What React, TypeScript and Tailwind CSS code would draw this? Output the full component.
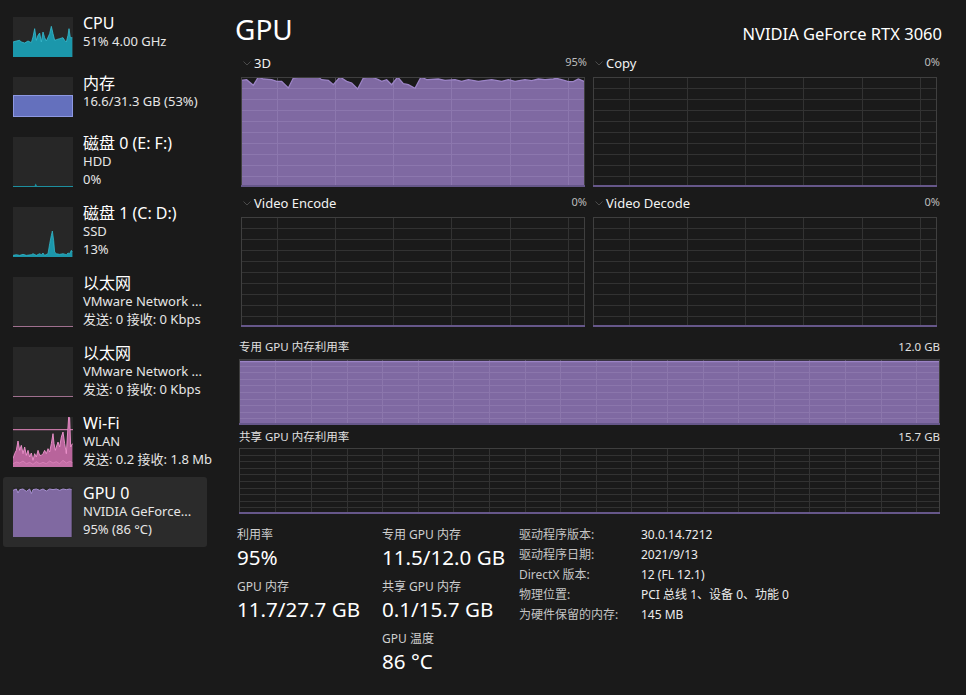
import React from "react";

type P = [number, number];

function mapPts(raw: P[], zx0: number, zy0: number, s = 3): P[] {
  return raw.map(([x, y]) => [(x - zx0) / s, (y - zy0) / s]);
}

function areaPath(p: P[], h: number) {
  const first = p[0];
  const last = p[p.length - 1];
  return (
    `M ${first[0]} ${h} ` +
    p.map(([x, y]) => `L ${x.toFixed(2)} ${y.toFixed(2)}`).join(" ") +
    ` L ${last[0]} ${h} Z`
  );
}
function linePath(p: P[]) {
  return p.map(([x, y], i) => `${i === 0 ? "M" : "L"} ${x.toFixed(2)} ${y.toFixed(2)}`).join(" ");
}

function Grid({ w, h, off, sp, rows, color }: { w: number; h: number; off: number; sp: number; rows: number; color: string }) {
  const els: React.ReactNode[] = [];
  for (let x = off; x < w - 1; x += sp) {
    const xx = Math.round(x) + 0.5;
    els.push(<line key={"v" + x} x1={xx} y1={0} x2={xx} y2={h} stroke={color} strokeWidth={1} />);
  }
  for (let i = 1; i < rows; i++) {
    const yy = Math.round((h * i) / rows) + 0.5;
    els.push(<line key={"h" + i} x1={0} y1={yy} x2={w} y2={yy} stroke={color} strokeWidth={1} />);
  }
  return <>{els}</>;
}

const PURPLE = "#7f69a2";
const PURPLE_LINE = "#9c84c6";

const raw3D: P[] = [
  [48, 242], [65, 240], [85, 257], [100, 232], [115, 238], [140, 240], [155, 245], [170, 245], [190, 265], [205, 235],
  [220, 233], [280, 233], [290, 240], [310, 242], [325, 255], [345, 232], [365, 245], [380, 250], [398, 268], [415, 235],
  [430, 232], [440, 232], [460, 240], [470, 245], [485, 240], [500, 255], [518, 232], [535, 252], [550, 255], [570, 266],
  [588, 232], [605, 240], [640, 238], [660, 242], [690, 240], [710, 245], [730, 240], [760, 245], [800, 240], [830, 245],
  [850, 240], [870, 245], [900, 240], [920, 243], [940, 238], [960, 240], [985, 238], [995, 236], [1010, 240], [1030, 246],
  [1045, 246], [1060, 238], [1077, 245],
];

function SmallGraph({ data }: { data?: P[] }) {
  const w = 344;
  const h = 110;
  return (
    <svg width={w} height={h} className="block">
      <rect x={0} y={0} width={w} height={h} fill="#1a1a1a" />
      <Grid w={w} h={h} off={35.5} sp={58.3} rows={10} color="#323232" />
      {data && (
        <>
          <path d={areaPath(data, h)} fill={PURPLE} />
          <g opacity={0.18}>
            <Grid w={w} h={h} off={35.5} sp={58.3} rows={10} color="#c9b8e6" />
          </g>
          <path d={linePath(data)} fill="none" stroke={PURPLE_LINE} strokeWidth={1.3} />
        </>
      )}
      <rect x={0.5} y={0.5} width={w - 1} height={h - 1} fill="none" stroke="#3f3f3f" strokeWidth={1} />
      <line x1={0} y1={h - 1} x2={w} y2={h - 1} stroke="#66578a" strokeWidth={2} />
    </svg>
  );
}

function Chevron() {
  return (
    <svg width="8" height="5" viewBox="0 0 8 5" className="block">
      <path d="M0.5 0.5 L4 4 L7.5 0.5" fill="none" stroke="#4a4a4a" strokeWidth="1" />
    </svg>
  );
}

function ChartCell({ label, pct, data }: { label: string; pct: string; data?: P[] }) {
  return (
    <div className="flex flex-col">
      <div className="flex h-[22px] items-start justify-between">
        <div className="-mt-[1px] flex items-center">
          <div className="ml-[5px] mr-[3px] mt-[1px] flex h-[16px] items-center">
            <Chevron />
          </div>
          <span className="text-[13px] leading-[16px] text-[#f2f2f2]">{label}</span>
        </div>
        <span className="-mt-[1px] text-[11px] leading-[16px] text-[#bdbdbd]">{pct}</span>
      </div>
      <div className="ml-[3px]">
        <SmallGraph data={data} />
      </div>
    </div>
  );
}

function MemGraph({ filled }: { filled: boolean }) {
  const w = 701;
  const h = 66;
  return (
    <svg width={w} height={h} className="block">
      <rect x={0} y={0} width={w} height={h} fill="#1a1a1a" />
      <Grid w={w} h={h} off={36.4} sp={35.6} rows={10} color="#323232" />
      {filled && (
        <>
          <rect x={0} y={2} width={w} height={h - 2} fill={PURPLE} />
          <g opacity={0.12}>
            <Grid w={w} h={h} off={36.4} sp={35.6} rows={10} color="#e0d4f5" />
          </g>
          <line x1={0} y1={2.5} x2={w} y2={2.5} stroke={PURPLE_LINE} strokeWidth={1.5} />
        </>
      )}
      <rect x={0.5} y={0.5} width={w - 1} height={h - 1} fill="none" stroke="#3f3f3f" strokeWidth={1} />
      <line x1={0} y1={h - 1} x2={w} y2={h - 1} stroke="#66578a" strokeWidth={2} />
    </svg>
  );
}

/* ---------- Sidebar thumbnails ---------- */

const cpuRaw: P[] = [
  [40, 125], [50, 122], [60, 120], [65, 125], [75, 128], [85, 122], [95, 127], [100, 110], [105, 85], [110, 120],
  [115, 105], [120, 98], [125, 125], [130, 95], [135, 112], [140, 122], [150, 100], [155, 78], [160, 100], [165, 120],
  [170, 118], [180, 115], [190, 112], [195, 120], [200, 125], [205, 105], [208, 85], [212, 112], [218, 112],
];
const disk1Raw: P[] = [
  [40, 165], [50, 163], [60, 165], [70, 162], [80, 165], [95, 163], [100, 160], [110, 165], [120, 160], [125, 163],
  [130, 158], [135, 165], [145, 160], [150, 130], [155, 105], [158, 92], [162, 120], [165, 155], [170, 160], [180, 162],
  [190, 160], [200, 163], [205, 158], [210, 160], [215, 150], [218, 155],
];
const wifiRaw: P[] = [
  [40, 175], [45, 160], [50, 150], [55, 122], [60, 150], [65, 135], [70, 160], [75, 140], [80, 165], [85, 150],
  [90, 170], [95, 158], [100, 180], [105, 160], [110, 170], [115, 150], [120, 165], [125, 165], [130, 160], [135, 150],
  [140, 160], [145, 145], [150, 155], [155, 130], [160, 100], [163, 130], [167, 150], [170, 140], [175, 125], [180, 140],
  [185, 110], [190, 95], [195, 130], [200, 160], [203, 110], [207, 50], [210, 52], [213, 140], [218, 130],
];
const wifiLowRaw: P[] = [
  [40, 190], [50, 185], [60, 188], [70, 182], [80, 190], [90, 186], [100, 192], [110, 184], [120, 190], [130, 186],
  [140, 190], [150, 182], [160, 188], [170, 184], [180, 190], [190, 180], [200, 188], [210, 183], [218, 186],
];
const gpuRaw: P[] = [
  [40, 62], [50, 58], [55, 70], [60, 60], [70, 58], [80, 65], [90, 58], [95, 72], [100, 60], [110, 58], [120, 62],
  [130, 58], [140, 64], [150, 58], [160, 60], [170, 58], [180, 62], [190, 58], [200, 60], [210, 58], [216, 60],
];

function Thumb({ h, children }: { h: number; children?: React.ReactNode }) {
  return (
    <svg width={60} height={h} className="block shrink-0">
      <rect x={0} y={0} width={60} height={h} fill="#272727" />
      {children}
    </svg>
  );
}

function CpuThumb() {
  const p = mapPts(cpuRaw, 40, 50);
  return (
    <Thumb h={40}>
      <path d={areaPath(p, 40)} fill="#1b97ab" />
      <path d={linePath(p)} fill="none" stroke="#37bdd0" strokeWidth={0.8} />
    </Thumb>
  );
}
function MemThumb() {
  return (
    <Thumb h={40}>
      <rect x={0.5} y={18.5} width={59} height={21} fill="#6470bd" stroke="#8d98e2" strokeWidth={1} />
    </Thumb>
  );
}
function Disk0Thumb() {
  return (
    <Thumb h={50}>
      <path d="M0 50 L0 49 L21.5 49 L22.7 46.5 L24 49 L60 49 L60 50 Z" fill="#1d8f9f" />
    </Thumb>
  );
}
function Disk1Thumb() {
  const p = mapPts(disk1Raw, 40, 20);
  return (
    <Thumb h={50}>
      <path d={areaPath(p, 50)} fill="#1b97ab" />
      <path d={linePath(p)} fill="none" stroke="#37bdd0" strokeWidth={0.7} />
    </Thumb>
  );
}
function EthThumb() {
  return (
    <Thumb h={50}>
      <line x1={0} y1={49.5} x2={60} y2={49.5} stroke="#a0708f" strokeWidth={1} />
    </Thumb>
  );
}
function WifiThumb() {
  const p = mapPts(wifiRaw, 40, 50);
  const q = mapPts(wifiLowRaw, 40, 50);
  return (
    <Thumb h={50}>
      <line x1={0} y1={12.7} x2={60} y2={12.7} stroke="#e889c2" strokeWidth={1} />
      <path d={areaPath(p, 50)} fill="#b8649b" />
      <path d={linePath(p)} fill="none" stroke="#f094cf" strokeWidth={0.9} />
      <path d={areaPath(q, 50)} fill="#c46fa6" />
      <path d={linePath(q)} fill="none" stroke="#e58cc4" strokeWidth={0.6} />
    </Thumb>
  );
}
function GpuThumb() {
  const p = mapPts(gpuRaw, 40, 52);
  return (
    <Thumb h={50}>
      <path d={areaPath(p, 50)} fill="#8069a1" />
      <path d={linePath(p)} fill="none" stroke="#a68fd0" strokeWidth={1} />
    </Thumb>
  );
}

function SideItem({
  title,
  lines,
  thumb,
  selected,
}: {
  title: string;
  lines: string[];
  thumb: React.ReactNode;
  selected?: boolean;
}) {
  const tall = lines.length > 1;
  return (
    <div
      className={
        "ml-[3px] flex w-[204px] shrink-0 gap-[10px] rounded-[3px] pl-[10px] pt-[10px] " +
        (tall ? "h-[70px] " : "h-[60px] ") +
        (selected ? "bg-[#2b2b2b]" : "")
      }
    >
      {thumb}
      <div className="-mt-[4px] flex min-w-0 flex-col">
        <div className="h-[20px] whitespace-nowrap text-[16px] leading-[20px] text-white">{title}</div>
        {lines.map((l, i) => (
          <div key={i} className="h-[17.5px] whitespace-nowrap text-[13px] leading-[17.5px] text-[#e6e6e6]">
            {l}
          </div>
        ))}
      </div>
    </div>
  );
}

function Stat({ label, value }: { label: string; value: string }) {
  return (
    <div className="mb-[8px] flex flex-col">
      <div className="h-[16px] whitespace-nowrap text-[12px] leading-[16px] text-[#cfcfcf]">{label}</div>
      <div className="h-[28px] whitespace-nowrap text-[20.6px] leading-[28px] text-white">{value}</div>
    </div>
  );
}

export default function App() {
  const data3D = mapPts(raw3D, 48, 232);
  const info: [string, string][] = [
    ["驱动程序版本:", "30.0.14.7212"],
    ["驱动程序日期:", "2021/9/13"],
    ["DirectX 版本:", "12 (FL 12.1)"],
    ["物理位置:", "PCI 总线 1、设备 0、功能 0"],
    ["为硬件保留的内存:", "145 MB"],
  ];
  return (
    <div className="flex h-[695px] w-[966px] overflow-hidden bg-[#1a1a1a] font-[family-name:'Noto_Sans','Noto_Sans_CJK_SC',sans-serif] text-white">
      {/* Sidebar */}
      <div className="flex w-[235px] shrink-0 flex-col pt-[7px]">
        <SideItem title="CPU" lines={["51% 4.00 GHz"]} thumb={<CpuThumb />} />
        <SideItem title="内存" lines={["16.6/31.3 GB (53%)"]} thumb={<MemThumb />} />
        <SideItem title="磁盘 0 (E: F:)" lines={["HDD", "0%"]} thumb={<Disk0Thumb />} />
        <SideItem title="磁盘 1 (C: D:)" lines={["SSD", "13%"]} thumb={<Disk1Thumb />} />
        <SideItem title="以太网" lines={["VMware Network ...", "发送: 0 接收: 0 Kbps"]} thumb={<EthThumb />} />
        <SideItem title="以太网" lines={["VMware Network ...", "发送: 0 接收: 0 Kbps"]} thumb={<EthThumb />} />
        <SideItem title="Wi-Fi" lines={["WLAN", "发送: 0.2 接收: 1.8 Mb"]} thumb={<WifiThumb />} />
        <SideItem title="GPU 0" lines={["NVIDIA GeForce...", "95% (86 °C)"]} thumb={<GpuThumb />} selected />
      </div>

      {/* Main */}
      <div className="flex w-[707px] shrink-0 flex-col">
        <div className="flex h-[55px] items-baseline justify-between pt-[11px]">
          <span className="text-[28px] leading-[36px] text-white">GPU</span>
          <span className="text-[16.5px] leading-[36px] text-white">NVIDIA GeForce RTX 3060</span>
        </div>

        <div className="ml-[3px] grid w-[702px] grid-cols-[349px_350px] gap-x-[3px] gap-y-[8px]">
          <ChartCell label="3D" pct="95%" data={data3D} />
          <ChartCell label="Copy" pct="0%" />
          <ChartCell label="Video Encode" pct="0%" />
          <ChartCell label="Video Decode" pct="0%" />
        </div>

        <div className="ml-[4px] mt-[11px] flex w-[701px] flex-col">
          <div className="flex h-[18px] items-center justify-between text-[11.5px] leading-[18px] text-[#e0e0e0]">
            <span>专用 GPU 内存利用率</span>
            <span>12.0 GB</span>
          </div>
          <div className="mt-[3px]">
            <MemGraph filled />
          </div>
          <div className="mt-[3px] flex h-[18px] items-center justify-between text-[11.5px] leading-[18px] text-[#e0e0e0]">
            <span>共享 GPU 内存利用率</span>
            <span>15.7 GB</span>
          </div>
          <div className="mt-[2px]">
            <MemGraph filled={false} />
          </div>
        </div>

        <div className="ml-[2px] mt-[13px] flex">
          <div className="flex w-[145px] flex-col">
            <Stat label="利用率" value="95%" />
            <Stat label="GPU 内存" value="11.7/27.7 GB" />
          </div>
          <div className="flex w-[137px] flex-col">
            <Stat label="专用 GPU 内存" value="11.5/12.0 GB" />
            <Stat label="共享 GPU 内存" value="0.1/15.7 GB" />
            <Stat label="GPU 温度" value="86 °C" />
          </div>
          <div className="-mt-[2px] flex flex-col">
            {info.map(([k, v]) => (
              <div key={k} className="flex h-[20px] text-[12px] leading-[20px]">
                <span className="w-[122px] whitespace-nowrap text-[#c4c4c4]">{k}</span>
                <span className="whitespace-nowrap text-[#ececec]">{v}</span>
              </div>
            ))}
          </div>
        </div>
      </div>
    </div>
  );
}
